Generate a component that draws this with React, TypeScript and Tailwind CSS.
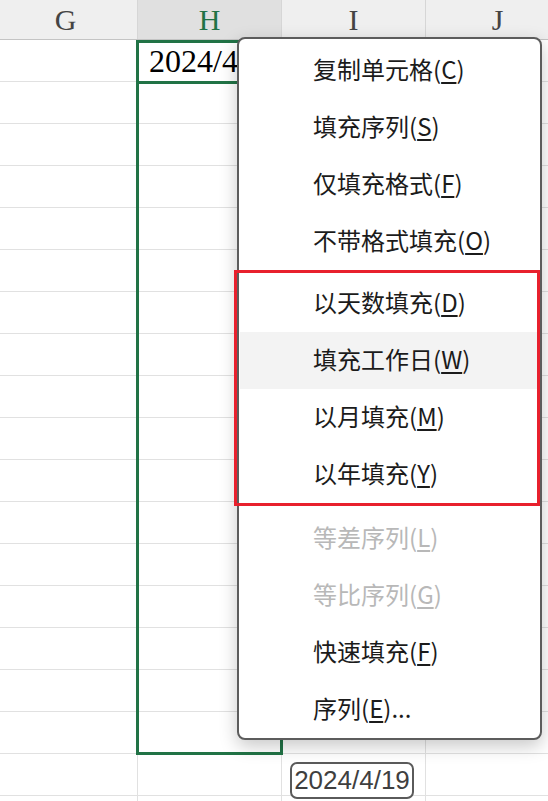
import React from "react";

const cols = ["G", "H", "I", "J"];
const rowCount = 19;

type Item = { label: string; key: string; suffix?: string; disabled?: boolean; hover?: boolean };

const top: Item[] = [
  { label: "复制单元格", key: "C" },
  { label: "填充序列", key: "S" },
  { label: "仅填充格式", key: "F" },
  { label: "不带格式填充", key: "O" },
];
const mid: Item[] = [
  { label: "以天数填充", key: "D" },
  { label: "填充工作日", key: "W", hover: true },
  { label: "以月填充", key: "M" },
  { label: "以年填充", key: "Y" },
];
const bottom: Item[] = [
  { label: "等差序列", key: "L", disabled: true },
  { label: "等比序列", key: "G", disabled: true },
  { label: "快速填充", key: "F" },
  { label: "序列", key: "E", suffix: "..." },
];

function MenuItem({ item, pad }: { item: Item; pad: string }) {
  return (
    <div
      className={
        "h-[57px] flex items-center pb-[4px] text-[24px] leading-none " +
        pad +
        (item.hover ? " bg-[#f3f3f3] ml-[3px]" : "") +
        (item.disabled ? " text-[#b8b8b8]" : " text-[#1b1b1b]")
      }
    >
      <span className="whitespace-nowrap">
        {item.label}(
        <span className="underline underline-offset-[3px] decoration-[1.5px]">{item.key}</span>)
        {item.suffix}
      </span>
    </div>
  );
}

export default function App() {
  return (
    <div
      className="relative w-[548px] h-[801px] overflow-hidden bg-white"
      style={{ fontFamily: '"Liberation Serif", serif' }}
    >
      {/* header */}
      <div className="flex h-[40px] ml-[-6px] bg-[#efefef] border-b border-[#c4c4c4]">
        {cols.map((c) => (
          <div
            key={c}
            className={
              "w-[144px] shrink-0 flex items-center justify-center text-[30px] border-r border-[#d6d6d6] " +
              (c === "H" ? "bg-[#e0e0e0] text-[#217346]" : "text-[#444444]")
            }
            style={{ fontFamily: '"Liberation Serif", serif' }}
          >
            {c}
          </div>
        ))}
      </div>
      {/* rows */}
      <div className="ml-[-6px]">
        {Array.from({ length: rowCount }).map((_, r) => (
          <div key={r} className="flex h-[42px]">
            {cols.map((c) => (
              <div
                key={c}
                className="w-[144px] shrink-0 border-r border-b border-[#e1e1e1] flex items-center pl-[11px] overflow-visible"
              >
                {r === 0 && c === "H" ? (
                  <span className="text-[32px] leading-[40px] text-black whitespace-nowrap">
                    2024/4/19
                  </span>
                ) : null}
              </div>
            ))}
          </div>
        ))}
      </div>

      {/* selection */}
      <div className="absolute left-[136px] top-[40px] w-[147px] h-[715px] border-[3px] border-[#217346]" />
      <div className="absolute left-[136px] top-[40px] w-[147px] h-[44px] border-[3px] border-[#217346]" />

      {/* context menu */}
      <div
        className="absolute left-[237px] top-[37px] w-[305px] bg-white border-2 border-[#5c5c5c] rounded-[8px] pt-[3px] shadow-[0_6px_18px_rgba(0,0,0,0.22)] z-10"
        style={{ fontFamily: '"Noto Sans CJK SC", "Noto Sans", sans-serif' }}
      >
        {top.map((it) => (
          <MenuItem key={it.label} item={it} pad="pl-[74px]" />
        ))}
        <div className="ml-[-5px] border-[3px] border-[#e8202d] pt-[2px] pb-0">
          {mid.map((it) => (
            <MenuItem key={it.label} item={it} pad={it.hover ? "pl-[73px]" : "pl-[76px]"} />
          ))}
        </div>
        <div className="mt-[4px]">
          {bottom.map((it) => (
            <MenuItem key={it.label} item={it} pad="pl-[74px]" />
          ))}
        </div>
      </div>

      {/* tooltip */}
      <div
        className="absolute left-[290px] top-[762px] w-[124px] h-[37px] border-2 border-[#5a5a5a] rounded-[7px] bg-white flex items-center justify-center text-[26px] text-[#3f3f3f] z-10"
        style={{ fontFamily: '"Liberation Sans", sans-serif' }}
      >
        2024/4/19
      </div>
    </div>
  );
}
